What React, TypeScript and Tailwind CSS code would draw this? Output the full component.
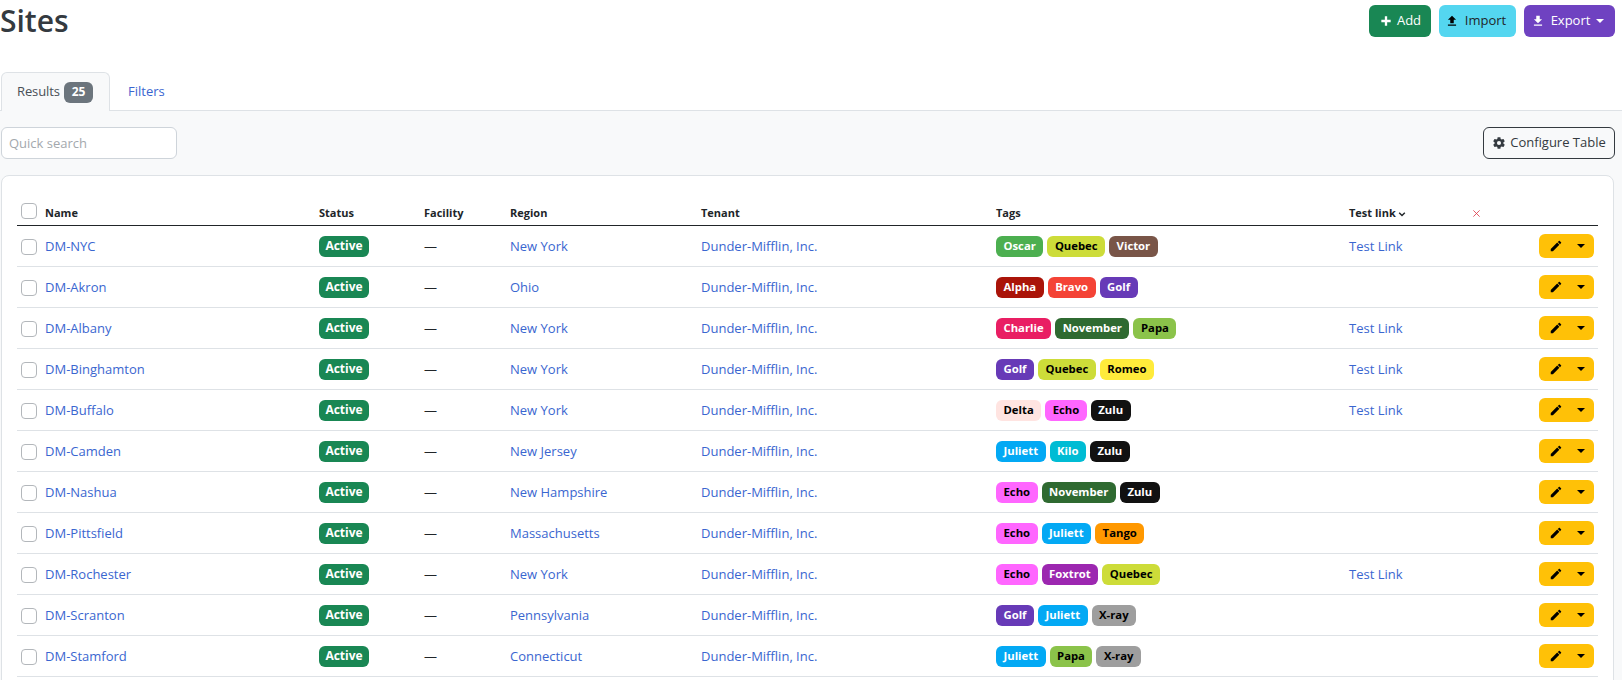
const tagColors: Record<string, [string, string]> = {
  Oscar: ['bg-[#4caf50]', 'text-white'],
  Quebec: ['bg-[#cddc39]', 'text-black'],
  Victor: ['bg-[#795548]', 'text-white'],
  Alpha: ['bg-[#aa1409]', 'text-white'],
  Bravo: ['bg-[#f44336]', 'text-white'],
  Golf: ['bg-[#673ab7]', 'text-white'],
  Charlie: ['bg-[#e91e63]', 'text-white'],
  November: ['bg-[#2f6a31]', 'text-white'],
  Papa: ['bg-[#8bc34a]', 'text-black'],
  Romeo: ['bg-[#ffeb3b]', 'text-black'],
  Delta: ['bg-[#ffe4e1]', 'text-black'],
  Echo: ['bg-[#ff66ff]', 'text-black'],
  Zulu: ['bg-[#111111]', 'text-white'],
  Juliett: ['bg-[#03a9f4]', 'text-white'],
  Kilo: ['bg-[#00bcd4]', 'text-white'],
  Tango: ['bg-[#ff9800]', 'text-black'],
  Foxtrot: ['bg-[#9c27b0]', 'text-white'],
  'X-ray': ['bg-[#9e9e9e]', 'text-black'],
};

const sites = [
  { name: 'DM-NYC', region: 'New York', tags: ['Oscar', 'Quebec', 'Victor'], link: true },
  { name: 'DM-Akron', region: 'Ohio', tags: ['Alpha', 'Bravo', 'Golf'], link: false },
  { name: 'DM-Albany', region: 'New York', tags: ['Charlie', 'November', 'Papa'], link: true },
  { name: 'DM-Binghamton', region: 'New York', tags: ['Golf', 'Quebec', 'Romeo'], link: true },
  { name: 'DM-Buffalo', region: 'New York', tags: ['Delta', 'Echo', 'Zulu'], link: true },
  { name: 'DM-Camden', region: 'New Jersey', tags: ['Juliett', 'Kilo', 'Zulu'], link: false },
  { name: 'DM-Nashua', region: 'New Hampshire', tags: ['Echo', 'November', 'Zulu'], link: false },
  { name: 'DM-Pittsfield', region: 'Massachusetts', tags: ['Echo', 'Juliett', 'Tango'], link: false },
  { name: 'DM-Rochester', region: 'New York', tags: ['Echo', 'Foxtrot', 'Quebec'], link: true },
  { name: 'DM-Scranton', region: 'Pennsylvania', tags: ['Golf', 'Juliett', 'X-ray'], link: false },
  { name: 'DM-Stamford', region: 'Connecticut', tags: ['Juliett', 'Papa', 'X-ray'], link: false },
];

function Icon({ d, size = 14 }: { d: string; size?: number }) {
  return (
    <svg width={size} height={size} viewBox="0 0 24 24" fill="currentColor" className="shrink-0">
      <path d={d} />
    </svg>
  );
}

const plus = 'M20 14H14V20H10V14H4V10H10V4H14V10H20V14Z';
const upload = 'M9,16V10H5L12,3L19,10H15V16H9M5,20V18H19V20H5Z';
const download = 'M5,20H19V18H5M19,9H15V3H9V9H5L12,16L19,9Z';
const pencil =
  'M20.71,7.04C21.1,6.65 21.1,6 20.71,5.63L18.37,3.29C18,2.9 17.35,2.9 16.96,3.29L15.12,5.12L18.87,8.87M3,17.25V21H6.75L17.81,9.93L14.06,6.18L3,17.25Z';
const cog =
  'M12,15.5A3.5,3.5 0 0,1 8.5,12A3.5,3.5 0 0,1 12,8.5A3.5,3.5 0 0,1 15.5,12A3.5,3.5 0 0,1 12,15.5M19.43,12.97C19.47,12.65 19.5,12.33 19.5,12C19.5,11.67 19.47,11.34 19.43,11L21.54,9.37C21.73,9.22 21.78,8.95 21.66,8.73L19.66,5.27C19.54,5.05 19.27,4.96 19.05,5.05L16.56,6.05C16.04,5.66 15.5,5.32 14.87,5.07L14.5,2.42C14.46,2.18 14.25,2 14,2H10C9.75,2 9.54,2.18 9.5,2.42L9.13,5.07C8.5,5.32 7.96,5.66 7.44,6.05L4.95,5.05C4.73,4.96 4.46,5.05 4.34,5.27L2.34,8.73C2.21,8.95 2.27,9.22 2.46,9.37L4.57,11C4.53,11.34 4.5,11.67 4.5,12C4.5,12.33 4.53,12.65 4.57,12.97L2.46,14.63C2.27,14.78 2.21,15.05 2.34,15.27L4.34,18.73C4.46,18.95 4.73,19.03 4.95,18.95L7.44,17.94C7.96,18.34 8.5,18.68 9.13,18.93L9.5,21.58C9.54,21.82 9.75,22 10,22H14C14.25,22 14.46,21.82 14.5,21.58L14.87,18.93C15.5,18.67 16.04,18.34 16.56,17.94L19.05,18.95C19.27,19.03 19.54,18.95 19.66,18.73L21.66,15.27C21.78,15.05 21.73,14.78 21.54,14.63L19.43,12.97Z';

function Caret() {
  return <span className="w-0 h-0 border-x-[4.5px] border-x-transparent border-t-[4.5px] border-t-current" />;
}

const rowGrid = 'grid grid-cols-[28px_274px_105px_86px_191px_295px_353px_122px_1fr] items-center';

export default function App() {
  return (
    <div className="w-[1622px] h-[680px] overflow-hidden bg-white text-[#212529] text-[13px] font-['Open_Sans',sans-serif]">
      <div className="flex justify-between h-[72px]">
        <h1 className="text-[30px] leading-[42px] font-semibold text-[#343a40]">Sites</h1>
        <div className="flex gap-2 pt-[5px] pr-[7px] h-[37px] box-content">
          <button className="h-8 w-[62px] rounded-md bg-[#198754] text-white flex items-center justify-center gap-1">
            <Icon d={plus} />
            Add
          </button>
          <button className="h-8 w-[77px] rounded-md bg-[#54d6f0] text-black flex items-center justify-center gap-1.5 pr-1">
            <span className="text-black"><Icon d={upload} /></span>
            <span className="text-[#212529]">Import</span>
          </button>
          <button className="h-8 w-[91px] rounded-md bg-[#6f42c1] text-white flex items-center justify-center gap-1.5 pr-1">
            <Icon d={download} />
            Export
            <Caret />
          </button>
        </div>
      </div>

      <div className="flex h-[39px] border-b border-[#dee2e6] pl-px">
        <div className="w-[109px] h-[39px] flex items-center gap-1 pl-[15px] rounded-t-md border border-[#dee2e6] border-b-0 bg-[#f8f9fa] text-[#495057] tracking-[-0.1px]">
          Results
          <span className="h-[21px] w-[29px] rounded-md bg-[#6c757d] text-white text-[12px] font-bold flex items-center justify-center">25</span>
        </div>
        <div className="pl-[18px] pt-px flex items-center text-[#3a66d0]">Filters</div>
      </div>

      <div className="bg-[#f8f9fa] h-[570px] pl-px pr-[7px] pt-4">
        <div className="flex justify-between h-8">
          <input
            placeholder="Quick search"
            className="w-[176px] h-8 bg-white border border-[#ced4da] rounded-md px-[7px] outline-none placeholder:text-[#a3a8ad]"
          />
          <button className="w-[132px] h-8 border border-[#343a40] rounded-md bg-[#f8f9fa] text-[#343a40] flex items-center justify-center gap-1">
            <Icon d={cog} />
            Configure Table
          </button>
        </div>

        <div className="mt-4 w-[1613px] bg-white border border-[#dee2e6] rounded-t-lg pl-[15px] pr-[15px] pt-[25px] h-[520px]">
          <div className={`${rowGrid} h-[25px] border-b border-[#212529] font-bold text-[11px] text-[#212529]`}>
            <span className="w-4 h-4 ml-1 -mt-[4px] border border-[#b3b7bb] rounded bg-white" />
            <span className="pt-px">Name</span>
            <span className="pt-px">Status</span>
            <span className="pt-px">Facility</span>
            <span className="pt-px">Region</span>
            <span className="pt-px">Tenant</span>
            <span className="pt-px">Tags</span>
            <span className="flex items-center gap-0.5 pt-px">
              Test link
              <svg width="8" height="8" viewBox="0 0 10 10" fill="none" stroke="currentColor" strokeWidth="1.8">
                <path d="M1.5 3.5 5 7l3.5-3.5" />
              </svg>
            </span>
            <span className="pl-[1px] text-[#dc3545]">
              <svg width="9" height="9" viewBox="0 0 10 10" fill="none" stroke="currentColor" strokeWidth="0.9">
                <path d="M1.5 1.5l7 7M8.5 1.5l-7 7" />
              </svg>
            </span>
          </div>
          {sites.map((s) => (
            <div key={s.name} className={`${rowGrid} h-[41px] border-b border-[#dee2e6]`}>
              <span className="w-4 h-4 ml-1 mt-[2px] border border-[#b3b7bb] rounded bg-white" />
              <a className="text-[#3a66d0] pt-[2px]">{s.name}</a>
              <span className="flex">
                <span className="inline-flex h-[21px] w-[50px] items-center justify-center rounded-md bg-[#198754] text-white text-[12px] font-bold">
                  Active
                </span>
              </span>
              <span className="pt-[2px]">—</span>
              <a className="text-[#3a66d0] pt-[2px]">{s.region}</a>
              <a className="text-[#3a66d0] pt-[2px]">Dunder-Mifflin, Inc.</a>
              <span className="flex gap-1">
                {s.tags.map((t) => (
                  <span
                    key={t}
                    className={`h-[21px] px-[7.5px] inline-flex items-center rounded-md text-[11.3px] font-bold ${tagColors[t][0]} ${tagColors[t][1]}`}
                  >
                    {t}
                  </span>
                ))}
              </span>
              <a className="text-[#3a66d0] pt-[2px]">{s.link ? 'Test Link' : ''}</a>
              <span className="flex justify-end pr-1">
                <span className="w-[55px] h-6 rounded-md bg-[#ffc107] text-black flex items-center justify-center gap-[14px]">
                  <Icon d={pencil} />
                  <Caret />
                </span>
              </span>
            </div>
          ))}
        </div>
      </div>
    </div>
  );
}
